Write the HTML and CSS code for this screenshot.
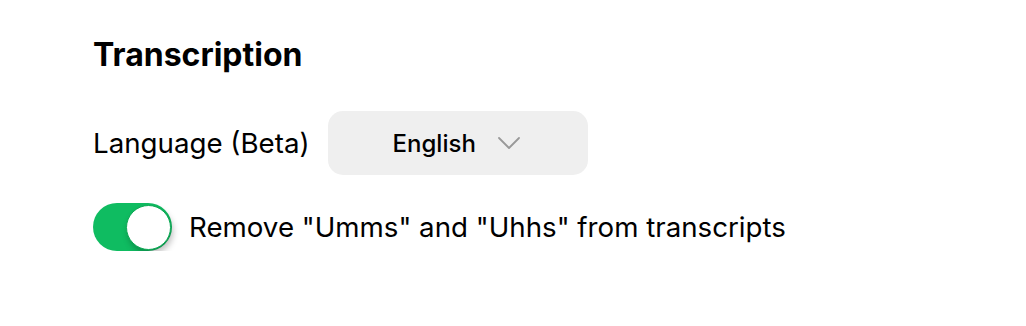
FILE: index.html
```html
<!DOCTYPE html>
<html lang="en">
<head>
<meta charset="utf-8">
<link rel="stylesheet" href="styles.css">
</head>
<body>
<section class="panel">
  <h2 class="title">Transcription</h2>
  <div class="row lang-row">
    <span class="label">Language (Beta)</span>
    <button class="select" type="button">
      <span class="select-value">English</span>
      <svg class="chevron" width="22" height="12" viewBox="0 0 22 12" aria-hidden="true">
        <path d="M1 1 L11 11 L21 1" fill="none" stroke="#999999" stroke-width="1.8" stroke-linecap="round" stroke-linejoin="round"/>
      </svg>
    </button>
  </div>
  <div class="row toggle-row">
    <span class="toggle on"><span class="knob"></span></span>
    <span class="label">Remove "Umms" and "Uhhs" from transcripts</span>
  </div>
</section>
</body>
</html>
```
FILE: styles.css
```css
html, body {
  margin: 0;
  padding: 0;
  background: #ffffff;
}
body {
  font-family: "Inter", "Noto Sans", sans-serif;
  color: #000000;
}
.panel {
  padding: 35px 0 0 93px;
  display: flex;
  flex-direction: column;
}
.title {
  margin: 0;
  font-size: 32px;
  font-weight: 700;
  line-height: 40px;
  letter-spacing: 0;
}
.row {
  display: flex;
  align-items: center;
}
.lang-row {
  margin-top: 36px;
  gap: 18px;
}
.label {
  font-size: 27.7px;
  line-height: 34px;
  color: #000;
}
.select {
  width: 260px;
  height: 64px;
  border: none;
  border-radius: 15px;
  background: #efefef;
  display: flex;
  align-items: center;
  justify-content: flex-start;
  padding: 0 0 0 65px;
  gap: 22px;
  font-family: inherit;
  cursor: pointer;
}
.select-value {
  font-size: 24px;
  font-weight: 500;
  color: #000;
}
.chevron {
  display: block;
}
.toggle-row {
  margin-top: 28px;
  gap: 17px;
}
.toggle {
  position: relative;
  width: 79px;
  height: 48px;
  border-radius: 24px;
  background: #0fbc61;
  flex-shrink: 0;
}
.knob {
  position: absolute;
  top: 2px;
  right: 1px;
  width: 43px;
  height: 43px;
  border-radius: 50%;
  background: #ffffff;
  border: 1px solid #0ea955;
  box-shadow: 2px 4px 6px rgba(0, 0, 0, 0.25);
}
```
